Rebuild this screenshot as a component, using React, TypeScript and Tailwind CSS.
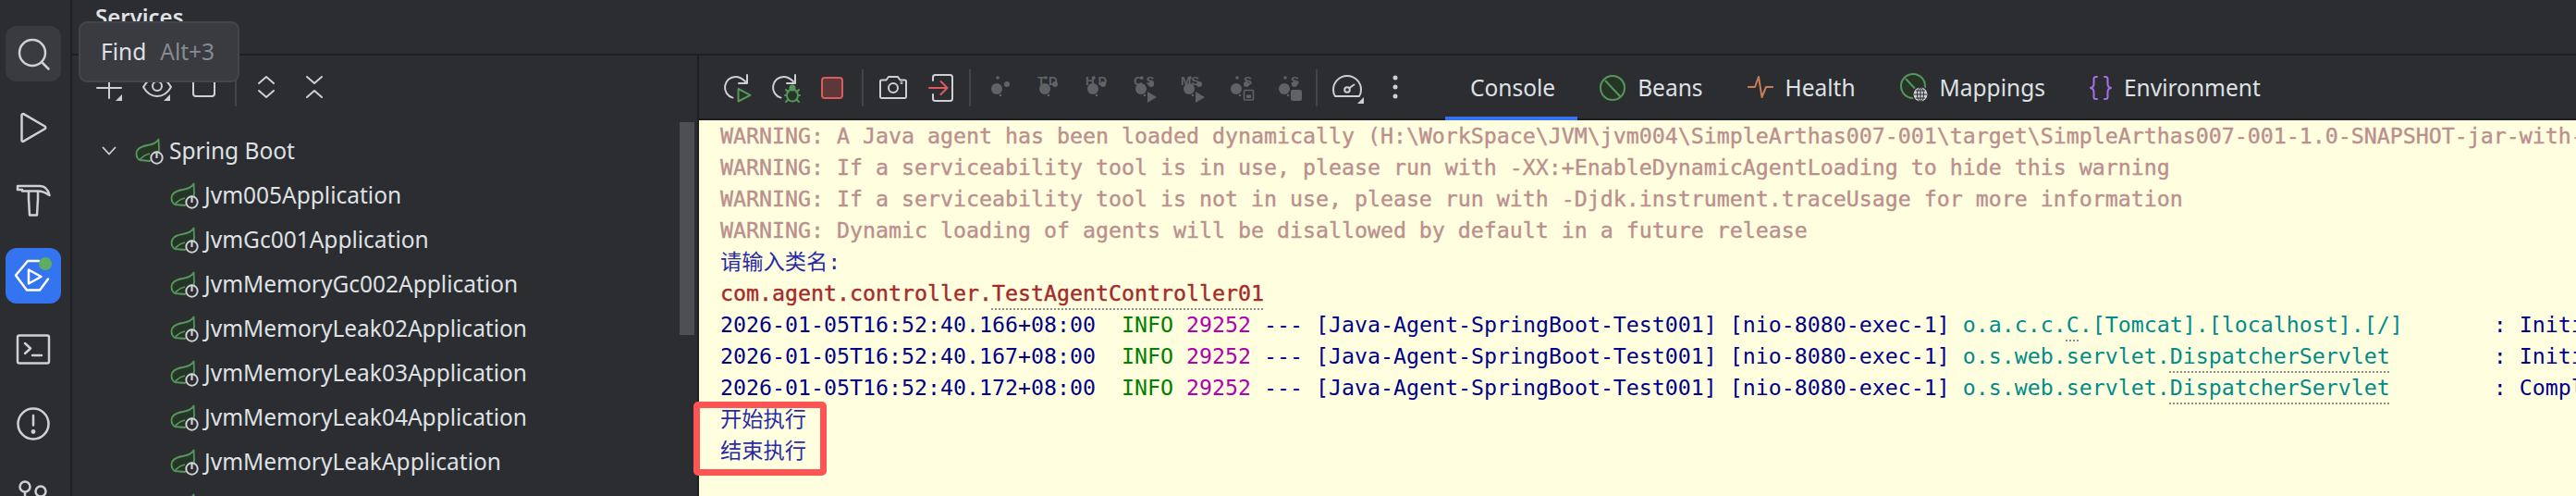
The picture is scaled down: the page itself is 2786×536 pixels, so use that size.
import React from 'react';

const GREEN = '#57965c';
const GREEN_FILL = '#253627';
const GREY = '#ced0d6';
const DIM = '#606266';

const railIcons: { key: string; active?: boolean; blue?: boolean; draw: React.ReactNode }[] = [
  {
    key: 'find',
    active: true,
    draw: (
      <>
        <circle cx="29" cy="29" r="14" />
        <path d="M39 39l7.5 7.5" />
      </>
    ),
  },
  { key: 'run', draw: <path d="M17.5 16.5c0-1.2 1-1.8 2-1.3l23 13.3c1 .6 1 2.2 0 2.8l-23 13.4c-1 .5-2-.1-2-1.3z" /> },
  {
    key: 'build',
    draw: (
      <>
        <path d="M13 13h24c5 0 9 3.500 10.500 10-4-3-8-4.500-13-4.500H18v-1.500h-5z" />
        <path d="M25 19v8l1 17.500h8l1-17.500v-8" />
      </>
    ),
  },
  {
    key: 'services',
    blue: true,
    draw: (
      <>
        <path d="M36 14H24L11 29.500 23 45.500h14l9-12" stroke="#fff" />
        <path d="M25 23.500v15l13.500-7.500z" stroke="#fff" />
        <circle cx="43" cy="17" r="7" fill="#5fad65" stroke="none" />
      </>
    ),
  },
  {
    key: 'terminal',
    draw: (
      <>
        <rect x="13" y="14.500" width="34" height="30" rx="2" />
        <path d="M21 23l6 5.500-6 5.500M29 36h10" />
      </>
    ),
  },
  {
    key: 'problems',
    draw: (
      <>
        <circle cx="30" cy="30" r="16.500" />
        <path d="M30 21v10.500" />
        <circle cx="30" cy="38.500" r="1.200" />
      </>
    ),
  },
  {
    key: 'git',
    draw: (
      <>
        <circle cx="21" cy="18" r="5.500" />
        <circle cx="38" cy="23" r="5.500" />
        <path d="M21 24v22M38 29v17" />
      </>
    ),
  },
];

const apps = [
  'Jvm005Application',
  'JvmGc001Application',
  'JvmMemoryGc002Application',
  'JvmMemoryLeak02Application',
  'JvmMemoryLeak03Application',
  'JvmMemoryLeak04Application',
  'JvmMemoryLeakApplication',
];

const Leaf = () => (
  <svg width="32" height="30" viewBox="0 0 32 30" fill="none" className="shrink-0">
    <path
      d="M25.500 2.500c-2 4-6 5.500-12 6.500C6 10.200 1.500 13.500 1.500 18.500c0 3 1.500 5 3.500 6.500l11 1c5-2 10-5 10-13z"
      fill={GREEN_FILL}
      stroke={GREEN}
      strokeWidth="1.800"
      strokeLinejoin="round"
    />
    <path d="M5 25c3-4 7-6 11-7" stroke={GREEN} strokeWidth="1.600" />
    <circle cx="23.500" cy="22.500" r="6.200" fill="#2b2d30" stroke={GREY} strokeWidth="2" />
    <path d="M23.500 15.500v7.500" stroke={GREY} strokeWidth="2.200" />
  </svg>
);

const Corner = ({ x, y }: { x: number; y: number }) => (
  <path d={`M${x} ${y}h7v-7z`} fill={GREY} stroke="none" />
);

const TreeTool = ({ children }: { children: React.ReactNode }) => (
  <svg width="52" height="40" viewBox="0 0 52 40" fill="none" stroke={GREY} strokeWidth="2" strokeLinecap="round" strokeLinejoin="round" className="shrink-0">
    {children}
  </svg>
);

const Sep = ({ className }: { className: string }) => <div className={`h-10 w-[2px] shrink-0 bg-[#43454a] ${className}`} />;

const Nodes = ({ x = 23 }: { x?: number }) => (
  <>
    <circle cx={x} cy="21" r="6" fill={DIM} />
    <circle cx={x + 11} cy="16" r="3" fill={DIM} />
    <circle cx={x + 1} cy="9" r="1.800" fill={DIM} />
    <circle cx={x + 4} cy="28" r="1.300" fill={DIM} />
  </>
);

const DimLabel = ({ x, text }: { x: number; text: string }) => (
  <text x={x} y="17" fontFamily="'Liberation Sans', sans-serif" fontWeight="700" fontSize="13.500" fill={DIM}>
    {text}
  </text>
);

const Dim = ({ children }: { children: React.ReactNode }) => (
  <svg width="52" height="40" viewBox="0 0 52 40" className="shrink-0">
    {children}
  </svg>
);

const Tab = ({ icon, label, active }: { icon?: React.ReactNode; label: string; active?: boolean }) => (
  <div className={`relative flex h-[66px] items-center gap-[13px] ${active ? 'pr-6 pl-[27px]' : 'px-6'}`}>
    {icon}
    <span className="text-[24.500px] text-[#dfe1e5]">{label}</span>
    {active && <div className="absolute right-0 -bottom-[2px] left-0 h-1 bg-[#3574f0]" />}
  </div>
);

const Blue = ({ children }: { children: React.ReactNode }) => <span className="text-[#00008b]">{children}</span>;

const Dotted = ({ children }: { children: React.ReactNode }) => (
  <span className="underline decoration-[#8c8c8c] decoration-dotted decoration-2 underline-offset-[8px]">{children}</span>
);

const LogLine = ({ time, logger, message }: { time: string; logger: React.ReactNode; message: string }) => (
  <div>
    <Blue>{time}</Blue>
    {'  '}
    <span className="text-[#008000]">INFO</span> <span className="text-[#b000b0]">29252</span>{' '}
    <Blue>--- [Java-Agent-SpringBoot-Test001] [nio-8080-exec-1]</Blue>{' '}
    <span className="text-[#008b8b]">{logger}</span>
    <Blue> : {message}</Blue>
  </div>
);

const warnings = [
  'WARNING: A Java agent has been loaded dynamically (H:\\WorkSpace\\JVM\\jvm004\\SimpleArthas007-001\\target\\SimpleArthas007-001-1.0-SNAPSHOT-jar-with-dependencies.jar)',
  'WARNING: If a serviceability tool is in use, please run with -XX:+EnableDynamicAgentLoading to hide this warning',
  'WARNING: If a serviceability tool is not in use, please run with -Djdk.instrument.traceUsage for more information',
  'WARNING: Dynamic loading of agents will be disallowed by default in a future release',
];

export default function App() {
  return (
    <div className="relative flex h-[536px] w-[2786px] overflow-hidden bg-[#2b2d30] font-['Noto_Sans',sans-serif]">
      {/* tool window rail */}
      <div className="flex h-full w-[78px] shrink-0 flex-col gap-5 overflow-hidden border-r-2 border-[#1e1f22] pt-7 pl-1.5">
        {railIcons.map((it) => (
          <div
            key={it.key}
            className={`h-[60px] w-[60px] shrink-0 rounded-xl ${it.active ? 'bg-[#393b40]' : ''} ${it.blue ? 'bg-[#3574f0]' : ''}`}
          >
            <svg width="60" height="60" viewBox="0 0 60 60" fill="none" stroke={GREY} strokeWidth="2.500" strokeLinecap="round" strokeLinejoin="round">
              {it.draw}
            </svg>
          </div>
        ))}
      </div>

      <div className="flex min-w-0 flex-1 flex-col">
        <div className="h-[60px] shrink-0 border-b-2 border-[#1e1f22] pl-[25px] text-[24px] leading-[36px] font-semibold text-[#dfe1e5]">Services</div>

        <div className="flex min-h-0 flex-1">
          {/* services tree */}
          <div className="relative w-[678px] shrink-0 border-r-2 border-[#1e1f22]">
            <div className="flex h-[68px] items-center pt-[2px] pl-3.5">
              <TreeTool>
                <path d="M26 9v22M13 20h26" />
                <Corner x={33} y={34} />
              </TreeTool>
              <TreeTool>
                <path d="M11 19c4-7 9-10 15-10s11 3 15 10c-4 7-9 10-15 10s-11-3-15-10z" />
                <circle cx="26" cy="18" r="5" />
                <Corner x={33} y={34} />
              </TreeTool>
              <TreeTool>
                <rect x="13" y="8" width="23" height="21" rx="3" />
              </TreeTool>
              <Sep className="ml-1.5" />
              <div className="ml-1.5 flex">
                <TreeTool>
                  <path d="M18 15l8-7 8 7M18 23l8 7 8-7" />
                </TreeTool>
                <TreeTool>
                  <path d="M18 8l8 7 8-7M18 30l8-7 8 7" />
                </TreeTool>
              </div>
            </div>

            <div className="pt-[11px] text-[24.500px] text-[#dfe1e5]">
              <div className="flex h-12 items-center pl-8">
                <svg width="16" height="10" viewBox="0 0 16 10" fill="none" stroke={GREY} strokeWidth="1.800" className="mr-5 shrink-0">
                  <path d="M1 1l7 7.500L15 1" />
                </svg>
                <Leaf />
                <span className="ml-[5px]">Spring Boot</span>
              </div>
              {apps.map((name) => (
                <div key={name} className="flex h-12 items-center pl-[106px]">
                  <Leaf />
                  <span className="ml-[5px]">{name}</span>
                </div>
              ))}
              {/* next row only shows the tip of its icon above the fold */}
              <div className="flex h-12 items-center pl-[106px]">
                <Leaf />
              </div>
            </div>

            <div className="absolute top-[72px] right-[3px] h-[230px] w-4 bg-[#4e4f52]" />
          </div>

          {/* run console */}
          <div className="flex min-w-0 flex-1 flex-col">
            <div className="flex h-[70px] shrink-0 items-center border-b-2 border-[#1e1f22] pt-[2px] pl-4">
              <svg width="52" height="40" viewBox="0 0 52 40" fill="none" stroke={GREY} strokeWidth="2" strokeLinecap="round" strokeLinejoin="round" className="shrink-0">
                <path d="M34 13c-3-3-6.500-5-10.500-5a11.500 11.500 0 0 0-3 22.600M36 6v9h-9" />
                <path d="M26.500 21v13.500l13-6.700z" fill={GREEN_FILL} stroke={GREEN} />
              </svg>
              <svg width="52" height="40" viewBox="0 0 52 40" fill="none" stroke={GREY} strokeWidth="2" strokeLinecap="round" strokeLinejoin="round" className="shrink-0">
                <path d="M34 13c-3-3-6.500-5-10.500-5a11.500 11.500 0 0 0-3 22.600M36 6v9h-9" />
                <g stroke={GREEN}>
                  <ellipse cx="33" cy="28" rx="6" ry="6.500" fill={GREEN_FILL} />
                  <circle cx="33" cy="20" r="2.500" fill={GREEN} />
                  <path d="M26 22l2.500 2.500M40 22l-2.500 2.500M25 28h2M39 28h2M26 35l2.500-2.500M40 35l-2.500-2.500" />
                </g>
              </svg>
              <div className="flex w-12 shrink-0 justify-center">
                <div className="h-6 w-6 rounded-[4px] border-2 border-[#db5c5c] bg-[#5e3838]" />
              </div>
              <Sep className="ml-2" />
              <svg width="52" height="40" viewBox="0 0 52 40" fill="none" stroke={GREY} strokeWidth="2" strokeLinecap="round" strokeLinejoin="round" className="ml-1.5 shrink-0">
                <path d="M13.500 11.500h5l2.500-3.500h10l2.500 3.500h5a1.500 1.500 0 0 1 1.500 1.500v16.500a1.500 1.500 0 0 1-1.500 1.500h-25a1.500 1.500 0 0 1-1.500-1.500V13a1.500 1.500 0 0 1 1.500-1.500z" />
                <circle cx="26" cy="20" r="5" />
                <circle cx="35" cy="14.500" r=".5" />
              </svg>
              <svg width="52" height="40" viewBox="0 0 52 40" fill="none" strokeWidth="2" strokeLinecap="round" strokeLinejoin="round" className="shrink-0">
                <path d="M17 12V8.500A2.500 2.500 0 0 1 19.500 6h16A2.500 2.500 0 0 1 38 8.500v23a2.500 2.500 0 0 1-2.500 2.500h-16a2.500 2.500 0 0 1-2.500-2.500V27" stroke={GREY} />
                <path d="M13 20h19M25.500 13l7 7-7 7" stroke="#db5c5c" />
              </svg>
              <Sep className="ml-1" />
              <div className="ml-[5px] flex">
                <Dim>
                  <Nodes />
                </Dim>
                <Dim>
                  <Nodes />
                  <DimLabel x={15} text="T D" />
                </Dim>
                <Dim>
                  <Nodes />
                  <DimLabel x={15} text="H D" />
                </Dim>
                <Dim>
                  <Nodes />
                  <DimLabel x={15} text="C S" />
                  <path d="M30 24v12l10-6z" fill={DIM} />
                </Dim>
                <Dim>
                  <Nodes />
                  <DimLabel x={14} text="MS" />
                  <path d="M30 24v12l10-6z" fill={DIM} />
                </Dim>
                <Dim>
                  <Nodes x={22} />
                  <DimLabel x={30} text="S" />
                  <rect x="30.500" y="22.500" width="10" height="10.500" rx="1" fill="none" stroke={DIM} strokeWidth="1.600" />
                  <rect x="33" y="27.500" width="5" height="3.500" fill={DIM} />
                </Dim>
                <Dim>
                  <Nodes x={22} />
                  <DimLabel x={29} text="S" />
                  <rect x="29" y="22" width="12" height="12" rx="2" fill={DIM} />
                </Dim>
              </div>
              <Sep className="ml-1" />
              <svg width="52" height="40" viewBox="0 0 52 40" fill="none" stroke={GREY} strokeWidth="2" strokeLinecap="round" strokeLinejoin="round" className="ml-1.5 shrink-0">
                <path d="M13 29c-1.500-2-2-4.500-2-7a15 15 0 0 1 30 0c0 2.500-.5 5-2 7z" />
                <circle cx="26" cy="22" r="2.800" />
                <path d="M28.500 20l5-3.500" />
                <path d="M37 37h7v-7z" fill={GREY} stroke="none" />
              </svg>
              <svg width="52" height="40" viewBox="0 0 52 40" fill={GREY} className="shrink-0">
                <circle cx="26" cy="9" r="2.500" />
                <circle cx="26" cy="19" r="2.500" />
                <circle cx="26" cy="29" r="2.500" />
              </svg>

              <div className="ml-7 flex">
                <Tab label="Console" active />
                <Tab
                  label="Beans"
                  icon={
                    <svg width="28" height="28" viewBox="0 0 28 28" fill={GREEN_FILL} stroke={GREEN} strokeWidth="2">
                      <circle cx="14" cy="14" r="13" />
                      <path d="M6 6l16 17" />
                    </svg>
                  }
                />
                <Tab
                  label="Health"
                  icon={
                    <svg width="28" height="28" viewBox="0 0 28 28" fill="none" stroke="#c77d55" strokeWidth="2" strokeLinejoin="round">
                      <path d="M0 13h8l4-11 3.500 22L20 13h8" />
                    </svg>
                  }
                />
                <Tab
                  label="Mappings"
                  icon={
                    <svg width="30" height="32" viewBox="0 0 30 32">
                      <circle cx="14" cy="14" r="13" fill={GREEN_FILL} stroke={GREEN} strokeWidth="2" />
                      <path d="M6 6l16 17" stroke={GREEN} strokeWidth="2" />
                      <circle cx="22" cy="23" r="9" fill="#2b2d30" />
                      <circle cx="22" cy="23" r="7.500" fill={GREY} />
                      <path d="M15 23h14M22 16v14M17 19h10M17 27h10" stroke="#2b2d30" strokeWidth="1" />
                      <ellipse cx="22" cy="23" rx="3.500" ry="7.500" fill="none" stroke="#2b2d30" strokeWidth="1" />
                    </svg>
                  }
                />
                <Tab
                  label="Environment"
                  icon={
                    <svg width="24" height="26" viewBox="0 0 24 26" fill="none" stroke="#a571e6" strokeWidth="2" strokeLinecap="round" strokeLinejoin="round">
                      <path d="M8 1H6.500C5 1 4.500 2 4.500 3.500V9c0 2-1.500 3.500-3.500 4 2 .5 3.500 2 3.500 4v5.500C4.500 24 5 25 6.500 25H8" />
                      <path d="M16 1h1.500C19 1 19.500 2 19.500 3.500V9c0 2 1.500 3.500 3.500 4-2 .5-3.500 2-3.500 4v5.500c0 1.500-.5 2.500-2 2.500H16" />
                    </svg>
                  }
                />
              </div>
            </div>

            <div className="relative min-h-0 flex-1 overflow-hidden bg-[#ffffe0] pl-[23px] font-['DejaVu_Sans_Mono','Noto_Sans_CJK_SC',monospace] text-[23.250px] leading-[34px] whitespace-pre">
              {warnings.map((w) => (
                <div key={w} className="text-[#bc8f8f] [-webkit-text-stroke-width:0.4px]">
                  {w}
                </div>
              ))}
              <div className="text-[#2a2aa8]">请输入类名:</div>
              <div className="text-[#a52a2a] [-webkit-text-stroke-width:0.4px]">
                com.agent.controller.<Dotted>TestAgentController01</Dotted>
              </div>
              <LogLine
                time="2026-01-05T16:52:40.166+08:00"
                logger={
                  <>
                    o.a.c.c.<Dotted>C</Dotted>.[Tomcat].[localhost].[/]{'      '}
                  </>
                }
                message="Initializing Spring embedded WebApplicationContext: initialization completed in 2031 ms"
              />
              <LogLine
                time="2026-01-05T16:52:40.167+08:00"
                logger={
                  <>
                    o.s.web.servlet.<Dotted>DispatcherServlet</Dotted>
                    {'       '}
                  </>
                }
                message="Initializing Servlet 'dispatcherServlet'"
              />
              <LogLine
                time="2026-01-05T16:52:40.172+08:00"
                logger={
                  <>
                    o.s.web.servlet.<Dotted>DispatcherServlet</Dotted>
                    {'       '}
                  </>
                }
                message="Completed initialization in 5 ms"
              />
              <div className="text-[#2a2aa8]">开始执行</div>
              <div className="text-[#2a2aa8]">结束执行</div>
            </div>
          </div>
        </div>
      </div>

      {/* highlight drawn over the console output */}
      <div className="absolute top-[434px] left-[750px] h-20 w-[144px] rounded-[5px] border-[7px] border-[#ff5454]" />

      {/* hover tooltip */}
      <div className="absolute top-[23px] left-[85px] flex h-[66px] w-[174px] items-center gap-[15px] rounded-[9px] border-2 border-[#43454a] bg-[#393b40] pl-[22px] text-[24.500px]">
        <span className="text-[#dfe1e5]">Find</span>
        <span className="text-[#868a91]">Alt+3</span>
      </div>
    </div>
  );
}
